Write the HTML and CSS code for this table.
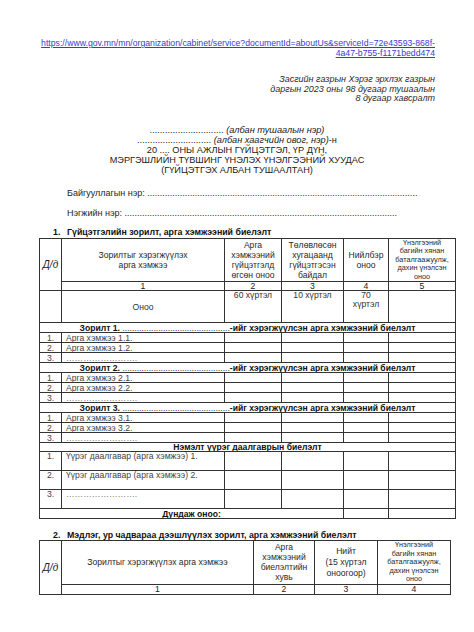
FILE: index.html
```html
<!DOCTYPE html>
<html lang="mn">
<head>
<meta charset="utf-8">
<title>Үнэлгээний хуудас</title>
<link rel="stylesheet" href="styles.css">
</head>
<body>
<div class="page">
  <div class="link"><a href="#">https://www.gov.mn/mn/organization/cabinet/service?documentId=aboutUs&amp;serviceId=72e43593-868f-<br>4a47-b755-f1171bedd474</a></div>

  <div class="annex">Засгийн газрын Хэрэг эрхлэх газрын<br>даргын 2023 оны 98 дугаар тушаалын<br>8 дугаар хавсралт</div>

  <div class="title">
    <div>............................. <i>(албан тушаалын нэр)</i></div>
    <div>............................. <i>(албан хаагчийн овог, нэр)</i>-н</div>
    <div>20 .... ОНЫ АЖЛЫН ГҮЙЦЭТГЭЛ, ҮР ДҮН,</div>
    <div>МЭРГЭШЛИЙН ТҮВШИНГ ҮНЭЛЭХ ҮНЭЛГЭЭНИЙ ХУУДАС</div>
    <div>(ГҮЙЦЭТГЭХ АЛБАН ТУШААЛТАН)</div>
  </div>

  <div class="field f1">Байгууллагын нэр: ............................................................................................................</div>
  <div class="field f2">Нэгжийн нэр: .............................................................................................................</div>

  <div class="heading h1"><span class="num">1.</span><span>Гүйцэтгэлийн зорилт, арга хэмжээний биелэлт</span></div>

  <table class="tbl t1">
    <colgroup><col class="c1"><col class="c2"><col class="c3"><col class="c4"><col class="c5"><col class="c6"></colgroup>
    <tr class="r-hdr">
      <td rowspan="2" class="dd">Д/д</td>
      <td class="hc">Зорилтыг хэрэгжүүлэх<br>арга хэмжээ</td>
      <td class="hc">Арга<br>хэмжээний<br>гүйцэтгэлд<br>өгсөн оноо</td>
      <td class="hc">Төлөвлөсөн<br>хугацаанд<br>гүйцэтгэсэн<br>байдал</td>
      <td class="hc">Нийлбэр<br>оноо</td>
      <td class="hc sm">Үнэлгээний<br>багийн хянан<br>баталгаажуулж,<br>дахин үнэлсэн<br>оноо</td>
    </tr>
    <tr class="r-num">
      <td class="nc">1</td><td class="nc">2</td><td class="nc">3</td><td class="nc">4</td><td class="nc">5</td>
    </tr>
    <tr class="r-score">
      <td></td>
      <td class="mid">Оноо</td>
      <td class="top">60 хүртэл</td>
      <td class="top">10 хүртэл</td>
      <td class="top">70<br>хүртэл</td>
      <td></td>
    </tr>
    <tr class="r1"><td colspan="6" class="goal"><b>Зорилт 1.</b> <span class="gd">.............................................</span><b>-ийг хэрэгжүүлсэн арга хэмжээний биелэлт</b></td></tr>
    <tr class="r1"><td class="n">1.</td><td class="tx">Арга хэмжээ 1.1.</td><td></td><td></td><td></td><td></td></tr>
    <tr class="r1"><td class="n">2.</td><td class="tx">Арга хэмжээ 1.2.</td><td></td><td></td><td></td><td></td></tr>
    <tr class="r1"><td class="n">3.</td><td class="tx dots">…………………….</td><td></td><td></td><td></td><td></td></tr>
    <tr class="r1"><td colspan="6" class="goal"><b>Зорилт 2.</b> <span class="gd">.............................................</span><b>-ийг хэрэгжүүлсэн арга хэмжээний биелэлт</b></td></tr>
    <tr class="r1"><td class="n">1.</td><td class="tx">Арга хэмжээ 2.1.</td><td></td><td></td><td></td><td></td></tr>
    <tr class="r1"><td class="n">2.</td><td class="tx">Арга хэмжээ 2.2.</td><td></td><td></td><td></td><td></td></tr>
    <tr class="r1"><td class="n">3.</td><td class="tx dots">…………………….</td><td></td><td></td><td></td><td></td></tr>
    <tr class="r1"><td colspan="6" class="goal"><b>Зорилт 3.</b> <span class="gd">.............................................</span><b>-ийг хэрэгжүүлсэн арга хэмжээний биелэлт</b></td></tr>
    <tr class="r1"><td class="n">1.</td><td class="tx">Арга хэмжээ 3.1.</td><td></td><td></td><td></td><td></td></tr>
    <tr class="r1"><td class="n">2.</td><td class="tx">Арга хэмжээ 3.2.</td><td></td><td></td><td></td><td></td></tr>
    <tr class="r1"><td class="n">3.</td><td class="tx dots">…………………….</td><td></td><td></td><td></td><td></td></tr>
    <tr class="r-sec"><td colspan="6" class="goal"><b>Нэмэлт үүрэг даалгаврын биелэлт</b></td></tr>
    <tr class="r-tall"><td class="n top">1.</td><td class="tx top">Үүрэг даалгавар (арга хэмжээ) 1.</td><td></td><td></td><td></td><td></td></tr>
    <tr class="r-tall"><td class="n top">2.</td><td class="tx top">Үүрэг даалгавар (арга хэмжээ) 2.</td><td></td><td></td><td></td><td></td></tr>
    <tr class="r-tall"><td class="n top">3.</td><td class="tx top dots">…………………….</td><td></td><td></td><td></td><td></td></tr>
    <tr class="r1"><td colspan="4" class="goal"><b>Дундаж оноо:</b></td><td></td><td></td></tr>
  </table>

  <div class="heading h2"><span class="num">2.</span><span>Мэдлэг, ур чадвараа дээшлүүлэх зорилт, арга хэмжээний биелэлт</span></div>

  <table class="tbl t2">
    <colgroup><col class="d1"><col class="d2"><col class="d3"><col class="d4"><col class="d5"></colgroup>
    <tr class="r-hdr">
      <td rowspan="2" class="dd">Д/д</td>
      <td class="hc">Зорилтыг хэрэгжүүлэх арга хэмжээ</td>
      <td class="hc">Арга<br>хэмжээний<br>биелэлтийн<br>хувь</td>
      <td class="hc lg">Нийт<br>(15 хүртэл<br>оноогоор)</td>
      <td class="hc sm">Үнэлгээний<br>багийн хянан<br>баталгаажуулж,<br>дахин үнэлсэн<br>оноо</td>
    </tr>
    <tr class="r1">
      <td class="nc">1</td><td class="nc">2</td><td class="nc">3</td><td class="nc">4</td>
    </tr>
  </table>
</div>
</body>
</html>
```
FILE: styles.css
```css
html, body {
  margin: 0;
  padding: 0;
  background: #ffffff;
}

body {
  font-family: "Liberation Sans", Arial, sans-serif;
  color: #1e1e1e;
  font-size: 9px;
}

.page {
  width: 474px;
  height: 632px;
  box-sizing: border-box;
  padding: 38px 39px 0 39px;
  overflow: hidden;
}

.link {
  text-align: right;
  line-height: 10px;
  font-size: 8.7px;
  white-space: nowrap;
}

.link a {
  color: #3b3bd0;
  text-decoration: underline;
}

.annex {
  margin-top: 17px;
  text-align: right;
  font-style: italic;
  line-height: 9.5px;
  color: #2a2a2a;
}

.title {
  margin-top: 21px;
  text-align: center;
  line-height: 10px;
  font-size: 9.2px;
  color: #1a1a1a;
}

.field {
  margin-left: 28px;
  white-space: nowrap;
  line-height: 10px;
}

.f1 { margin-top: 13px; }
.f2 { margin-top: 10px; }

.heading {
  display: flex;
  font-weight: bold;
  font-size: 8.8px;
  line-height: 10px;
  margin-left: 14px;
  color: #111;
}

.heading .num { width: 14px; }

.h1 { margin-top: 9px; margin-bottom: 1px; }
.h2 { margin-top: 11px; margin-bottom: 0; }

.tbl {
  border-collapse: collapse;
  table-layout: fixed;
  font-size: 8.6px;
}

.tbl td {
  border: 1px solid #333;
  padding: 0;
  line-height: 8px;
  vertical-align: middle;
  overflow: hidden;
  white-space: nowrap;
}

.t1 { width: 416px; }
.t2 { width: 411px; }

.c1 { width: 22px; }
.c2 { width: 163px; }
.c3 { width: 57px; }
.c4 { width: 62px; }
.c5 { width: 45px; }
.c6 { width: 67px; }

.d1 { width: 22px; }
.d2 { width: 192px; }
.d3 { width: 61px; }
.d4 { width: 63px; }
.d5 { width: 73px; }

.r-hdr { height: 43px; }
.r-num { height: 9px; }
.r-score { height: 32px; }
.r1 { height: 10px; }
.r-sec { height: 9px; }
.r-tall { height: 19px; }

.tbl td.dd { font-style: italic; font-size: 10px; line-height: 11px; text-align: center; color: #222; }
.tbl td.hc { text-align: center; line-height: 10px; color: #2a2a2a; }
.tbl td.hc.sm { font-size: 7.3px; line-height: 8.5px; }
.tbl td.hc.lg { font-size: 8.6px; line-height: 11px; }
.tbl td.nc { text-align: center; color: #222; }
.tbl td.mid { text-align: center; color: #333; }
.tbl td.top { vertical-align: top; text-align: center; color: #333; line-height: 9px; }
.tbl td.goal { text-align: center; color: #111; }
.gd { font-weight: normal; color: #444; }
.tbl td.n { padding-left: 7px; color: #444; text-align: left; }
.tbl td.tx { padding-left: 4px; color: #444; text-align: left; }
.tbl td.dots { color: #777; }
```
